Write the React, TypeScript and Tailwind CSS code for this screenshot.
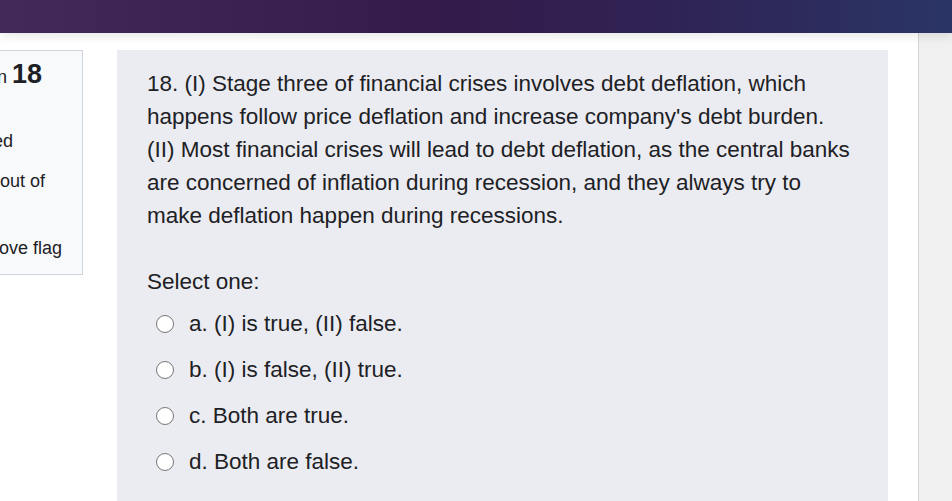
import React from "react";

const options = [
  "a. (I) is true, (II) false.",
  "b. (I) is false, (II) true.",
  "c. Both are true.",
  "d. Both are false.",
];

export default function App() {
  return (
    <div className="h-[501px] w-[952px] overflow-hidden bg-white text-[#1d2125] font-['Liberation_Sans',Arial,sans-serif] flex flex-col">
      <div className="relative z-10 h-[33px] shrink-0 bg-[linear-gradient(90deg,#42295a_0%,#341b4b_45%,#2f2354_70%,#2a3566_100%)] shadow-[0_3px_10px_rgba(0,0,0,0.10)]" />
      <div className="flex flex-1">
        <div className="flex w-[918px] items-start pt-[17px]">
          {/* question info card, partly scrolled off */}
          <div className="-ml-[75px] w-[158px] h-[225px] shrink-0 border border-[#ced4da] bg-[#f8f9fa] pl-[9px] pt-[8px] whitespace-nowrap">
            <div className="leading-[30px] text-[18px]">
              Question <span className="text-[27px] font-bold">18</span>
            </div>
            <div className="mt-[13px] text-[18px] leading-[24px]">
              Not yet
              <br />
              answered
            </div>
            <div className="mt-[16px] text-[18px] leading-[24px]">
              Marked out of
              <br />
              1.00
            </div>
            <div className="mt-[19px] flex items-center text-[18px] leading-[24px]">
              <svg width="16" height="16" viewBox="0 0 16 16" className="mr-[10px]">
                <path d="M3 2v13M3 2h9l-2 3 2 3H3" fill="none" stroke="#1d2125" strokeWidth="1.5" />
              </svg>
              Remove flag
            </div>
          </div>

          <div className="ml-[34px] w-[771px] h-[460px] shrink-0 bg-[#ebecf1] pl-[30px] pr-[10px] pt-[17px]">
            <p className="text-[22.5px] leading-[33px] whitespace-nowrap">
              18. (I) Stage three of financial crises involves debt deflation, which
              <br />
              happens follow price deflation and increase company's debt burden.
              <br />
              (II) Most financial crises will lead to debt deflation, as the central banks
              <br />
              are concerned of inflation during recession, and they always try to
              <br />
              make deflation happen during recessions.
            </p>
            <div className="mt-[33px] text-[22.5px] leading-[33px]">Select one:</div>
            <div className="mt-[3px]">
              {options.map((o) => (
                <label key={o} className="flex h-[46px] items-center text-[22.5px]">
                  <span className="ml-[9px] h-[18px] w-[18px] rounded-full border border-[#767676] bg-white" />
                  <span className="ml-[15px]">{o}</span>
                </label>
              ))}
            </div>
          </div>
        </div>
        <div className="flex-1 border-l border-[#d6d6d6] bg-[#f0f0f0]" />
      </div>
    </div>
  );
}
